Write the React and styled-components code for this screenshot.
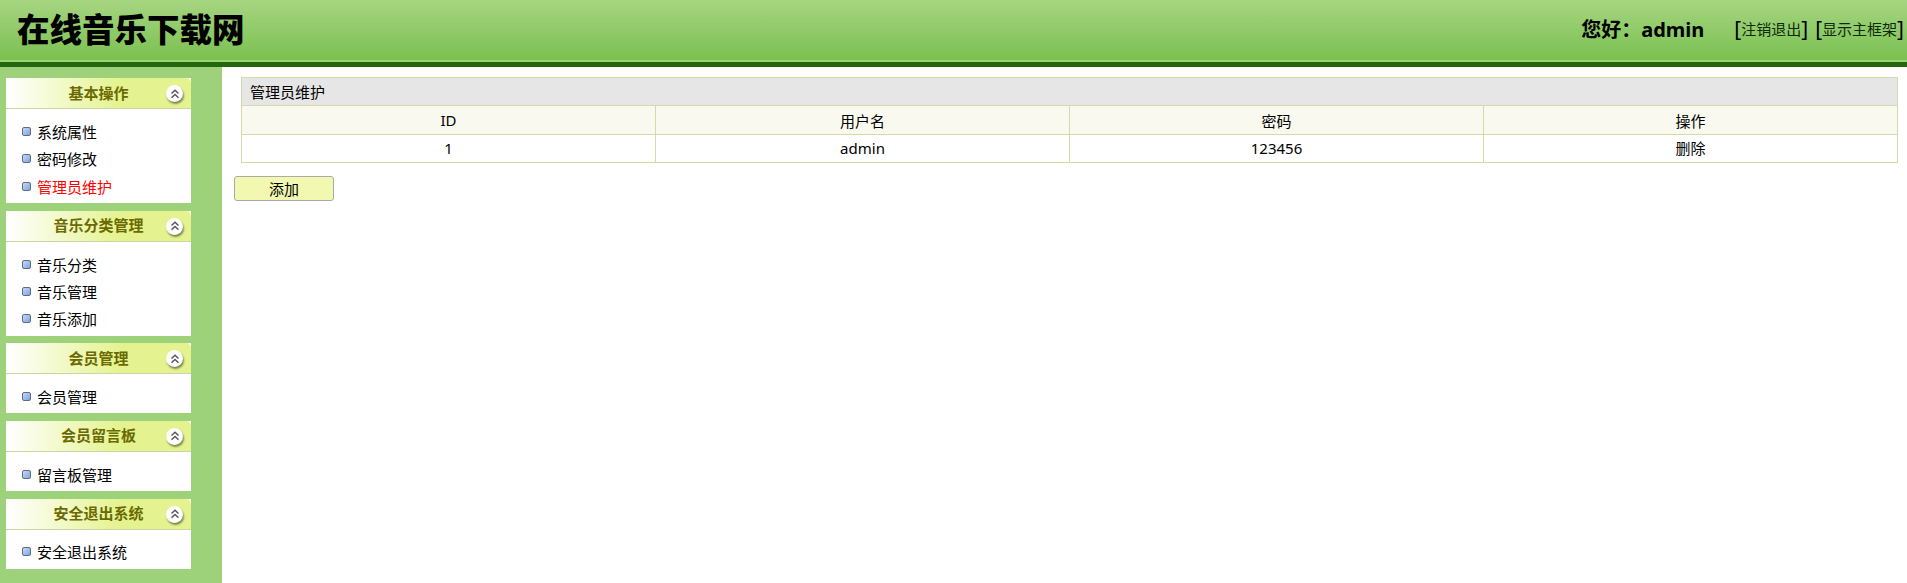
import React from "react";
import styled, { createGlobalStyle } from "styled-components";

const menus = [
  { title: "基本操作", items: ["系统属性", "密码修改", "管理员维护"] },
  { title: "音乐分类管理", items: ["音乐分类", "音乐管理", "音乐添加"] },
  { title: "会员管理", items: ["会员管理"] },
  { title: "会员留言板", items: ["留言板管理"] },
  { title: "安全退出系统", items: ["安全退出系统"] },
];

function CollapseIcon() {
  return (
    <IconCircle>
      <svg width="10" height="10" viewBox="0 0 10 10" fill="none" stroke="#555" strokeWidth="1.4">
        <path d="M1.5 4.6 5 1.2l3.5 3.4" />
        <path d="M1.5 8.8 5 5.4l3.5 3.4" />
      </svg>
    </IconCircle>
  );
}

export default function App() {
  return (
    <Page>
      <GlobalStyle />
      <Header>
        <Title>在线音乐下载网</Title>
        <UserBar>
          <Greeting>您好：admin</Greeting>
          <TopLink>
            <Bracket>[</Bracket>注销退出<Bracket>]</Bracket>
          </TopLink>
          <TopLink>
            <Bracket>[</Bracket>显示主框架<Bracket>]</Bracket>
          </TopLink>
        </UserBar>
      </Header>
      <Body>
        <Sidebar>
          {menus.map((menu) => (
            <Panel key={menu.title}>
              <PanelHead>
                <PanelTitle>{menu.title}</PanelTitle>
                <CollapseIcon />
              </PanelHead>
              <PanelBody>
                {menu.items.map((item) => (
                  <MenuItem key={item} $active={item === "管理员维护"}>
                    <Bullet />
                    {item}
                  </MenuItem>
                ))}
              </PanelBody>
            </Panel>
          ))}
        </Sidebar>
        <Main>
          <Table>
            <colgroup>
              <col width="25%" />
              <col width="25%" />
              <col width="25%" />
              <col width="25%" />
            </colgroup>
            <tbody>
              <tr>
                <CaptionCell colSpan={4}>管理员维护</CaptionCell>
              </tr>
              <tr>
                <HeadCell>ID</HeadCell>
                <HeadCell>用户名</HeadCell>
                <HeadCell>密码</HeadCell>
                <HeadCell>操作</HeadCell>
              </tr>
              <tr>
                <Cell>1</Cell>
                <Cell>admin</Cell>
                <Cell>123456</Cell>
                <Cell>删除</Cell>
              </tr>
            </tbody>
          </Table>
          <AddButton type="button">添加</AddButton>
        </Main>
      </Body>
    </Page>
  );
}

const sans = `"Noto Sans", "Noto Sans CJK SC", sans-serif`;

const GlobalStyle = createGlobalStyle`
  html, body {
    margin: 0;
    padding: 0;
    background: #fff;
  }
`;

const Page = styled.div`
  width: 1907px;
  height: 583px;
  overflow: hidden;
  font-family: ${sans};
  font-size: 15px;
  color: #000;
`;

const Header = styled.div`
  height: 67px;
  box-sizing: border-box;
  display: flex;
  justify-content: space-between;
  align-items: center;
  padding: 0 3px 5px 17px;
  background: linear-gradient(#a6d581, #79c04f);
  border-bottom: 5px solid #25650e;
  box-shadow: inset 0 -2px 0 #98d56f;
`;

const Title = styled.h1`
  margin: 2px 0 0;
  font-size: 32.5px;
  line-height: 40px;
  font-weight: 900;
`;

const UserBar = styled.div`
  display: flex;
  align-items: center;
`;

const Greeting = styled.span`
  font-size: 20px;
  font-weight: 700;
  margin-right: 23px;
`;

const TopLink = styled.span`
  display: inline-flex;
  align-items: center;
  margin-left: 7px;
  color: #0f2a0a;
`;

const Bracket = styled.span`
  font-size: 21px;
  color: #000;
`;

const Body = styled.div`
  display: flex;
  height: 516px;
`;

const Sidebar = styled.div`
  width: 222px;
  flex: none;
  box-sizing: border-box;
  padding: 11px 31px 0 6px;
  background: #9dd27a;
  display: flex;
  flex-direction: column;
  gap: 7.5px;
`;

const Panel = styled.div`
  background: #fff;
`;

const PanelHead = styled.div`
  height: 31.25px;
  box-sizing: border-box;
  position: relative;
  display: flex;
  align-items: center;
  justify-content: center;
  padding-bottom: 2px;
  background: linear-gradient(to right, #fff, #e4f38f 62%);
  border-bottom: 1px solid #cfd4a6;
  border-radius: 5px 5px 0 0;
`;

const PanelTitle = styled.span`
  font-weight: 700;
  font-size: 15px;
  color: #6b6a00;
`;

const IconCircle = styled.span`
  position: absolute;
  right: 8px;
  top: 7px;
  width: 17px;
  height: 17px;
  border-radius: 50%;
  background: #fff;
  box-shadow: 1px 2px 2px rgba(0, 0, 0, 0.45);
  display: flex;
  align-items: center;
  justify-content: center;
`;

const PanelBody = styled.div`
  padding: 8.5px 0 3px;
`;

const MenuItem = styled.div`
  height: 27.45px;
  display: flex;
  align-items: center;
  padding-left: 16px;
  gap: 6px;
  color: ${(p) => (p.$active ? "#f00" : "#000")};
`;

const Bullet = styled.i`
  width: 9px;
  height: 9px;
  border-radius: 2px;
  box-sizing: border-box;
  border: 1px solid #626c80;
  background: linear-gradient(135deg, #c3d8f6, #7ea6e0);
`;

const Main = styled.div`
  flex: 1;
  padding: 10px 9px 0 12px;
`;

const Table = styled.table`
  width: 1657px;
  margin-left: 7px;
  border-collapse: collapse;
  table-layout: fixed;
`;

const CaptionCell = styled.td`
  height: 27px;
  padding: 0 0 0 8px;
  background: #e6e6e6;
  border: 1px solid #d3dba8;
`;

const HeadCell = styled.td`
  height: 28px;
  padding: 0;
  text-align: center;
  background: #f9f9f0;
  border: 1px solid #d3dba8;
`;

const Cell = styled.td`
  height: 25px;
  padding: 0 0 2px;
  text-align: center;
  border: 1px solid #d3dba8;
`;

const AddButton = styled.button`
  display: block;
  width: 100px;
  height: 25px;
  margin-top: 13px;
  padding: 0;
  font-family: inherit;
  font-size: 15px;
  color: #000;
  background: #f2f8b0;
  border: 1px solid #aaa;
  border-radius: 3px;
`;
